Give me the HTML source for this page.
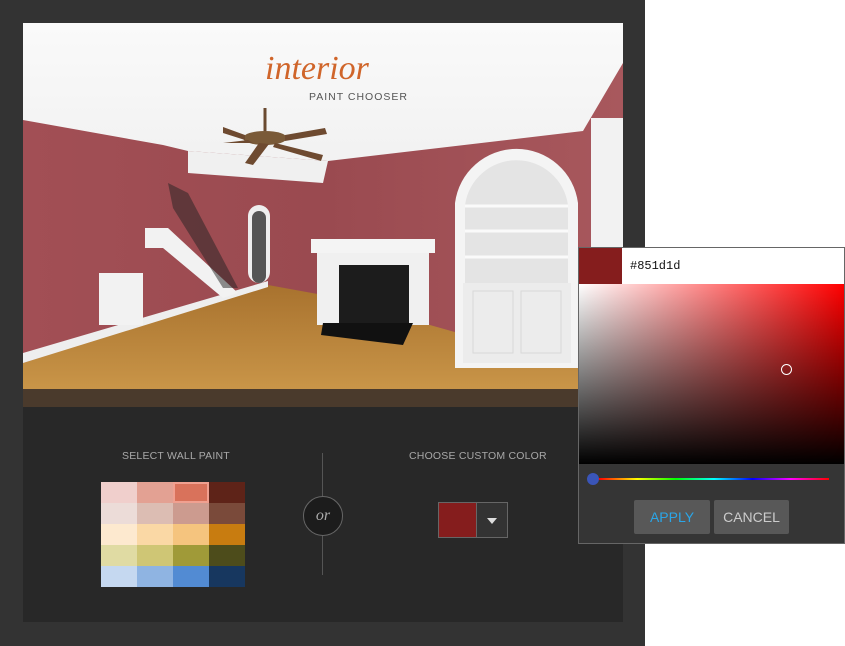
<!DOCTYPE html>
<html><head><meta charset="utf-8"><style>
*{margin:0;padding:0;box-sizing:border-box}
body{width:845px;height:646px;background:#fff;position:relative;overflow:hidden;font-family:"Liberation Sans",sans-serif}
#dark{position:absolute;left:0;top:0;width:645px;height:646px;background:#333}
#panel{position:absolute;left:23px;top:23px;width:600px;height:599px;background:#282828}
.lbl{position:absolute;color:#a8a8a8;font-size:10.5px;letter-spacing:.2px}
.grid{position:absolute;left:101px;top:482px;width:144px;display:grid;grid-template-columns:repeat(4,36px);grid-auto-rows:21px}
#picker{position:absolute;left:578px;top:247px;width:267px;height:297px;background:#353535;border:1px solid #666}
.btn{position:absolute;top:252px;height:34px;background:#585858;border-radius:2px;font-size:14px;text-align:center;line-height:34px}
</style></head><body>
<div id="dark"></div>
<div id="panel"></div>
<svg style="position:absolute;left:23px;top:23px" width="600" height="384" viewBox="0 0 600 384">
<defs>
<linearGradient id="c" x1="0" y1="0" x2="0" y2="1"><stop offset="0" stop-color="#fafafa"/><stop offset="1" stop-color="#e2e2e2"/></linearGradient>
<linearGradient id="f" x1="0" y1="0" x2="0" y2="1"><stop offset="0" stop-color="#a8722e"/><stop offset="1" stop-color="#c99548"/></linearGradient>
<linearGradient id="w" x1="0" y1="0" x2="1" y2="0"><stop offset="0" stop-color="#a24f55"/><stop offset=".5" stop-color="#9a4a50"/><stop offset="1" stop-color="#a8585d"/></linearGradient>
</defs>
<rect width="600" height="384" fill="url(#c)"/>
<polygon points="0,97 140,122 165,128 305,138 560,108 600,40 600,320 0,340" fill="url(#w)"/>
<polygon points="165,128 305,138 300,160 165,150" fill="#f0f0f0"/>
<polygon points="0,340 245,262 300,272 560,345 560,366 0,366" fill="url(#f)"/>
<polygon points="0,330 245,258 245,264 0,340" fill="#eee"/>
<polygon points="122,205 145,205 215,270 200,275 140,225 122,225" fill="#f2f2f2"/>
<polygon points="145,160 165,170 215,265 200,265 150,185" fill="#222" opacity=".5"/>
<rect x="225" y="182" width="22" height="78" rx="11" fill="#eee"/><rect x="229" y="188" width="14" height="72" rx="7" fill="#555"/>
<rect x="76" y="250" width="44" height="52" fill="#f2f2f2"/>
<rect x="288" y="216" width="124" height="14" fill="#f4f4f4"/>
<rect x="294" y="230" width="112" height="72" fill="#f0f0f0"/>
<rect x="316" y="242" width="70" height="60" fill="#1c1c1c"/>
<polygon points="300,300 390,300 380,322 298,312" fill="#111"/>
<path d="M432,345 V180 A62,62 0 0 1 555,180 V345 Z" fill="#f4f4f4"/>
<path d="M442,260 V182 A52,52 0 0 1 545,182 V260 Z" fill="#e4e4e4"/>
<g stroke="#fafafa" stroke-width="3"><line x1="442" y1="183" x2="545" y2="183"/><line x1="442" y1="208" x2="545" y2="208"/><line x1="442" y1="234" x2="545" y2="234"/></g>
<rect x="440" y="260" width="108" height="80" fill="#ececec"/>
<rect x="450" y="268" width="40" height="62" fill="none" stroke="#d8d8d8"/><rect x="498" y="268" width="40" height="62" fill="none" stroke="#d8d8d8"/>
<rect x="568" y="95" width="32" height="150" fill="#f2f2f2"/>
<line x1="242" y1="85" x2="242" y2="108" stroke="#6a4a30" stroke-width="3"/>
<ellipse cx="242" cy="115" rx="22" ry="7" fill="#7a5a38"/>
<g fill="#6e4a30"><polygon points="222,112 200,104 200,110 222,117"/><polygon points="262,112 302,105 304,111 262,118"/><polygon points="236,120 222,140 230,142 246,121"/><polygon points="252,120 300,132 298,138 250,124"/><polygon points="225,117 200,120 230,120"/></g>
<rect x="0" y="366" width="600" height="18" fill="#4a3a2c"/>
<text x="242" y="56" font-family="Liberation Serif,serif" font-style="italic" font-size="34" fill="#d0652a">interior</text>
<text x="286" y="77" font-size="10.5" fill="#555" letter-spacing="1">PAINT CHOOSER</text>
</svg>
<div class="lbl" style="left:122px;top:450px">SELECT WALL PAINT</div>
<div class="lbl" style="left:409px;top:450px">CHOOSE CUSTOM COLOR</div>
<div class="grid">
<div style="background:#f0cfcc"></div><div style="background:#e3a193"></div><div style="background:#d9725b;border:2px solid #f0a090"></div><div style="background:#5e2318"></div>
<div style="background:#ecdcd8"></div><div style="background:#dcbdb3"></div><div style="background:#cc9b8f"></div><div style="background:#7a4a3a"></div>
<div style="background:#fde9cf"></div><div style="background:#fad8a5"></div><div style="background:#f5c47e"></div><div style="background:#c87c10"></div>
<div style="background:#e0dba3"></div><div style="background:#cfc675"></div><div style="background:#a09a38"></div><div style="background:#4d4c1b"></div>
<div style="background:#c5d8f0"></div><div style="background:#8fb4e2"></div><div style="background:#528bd3"></div><div style="background:#17375f"></div>
</div>
<div style="position:absolute;left:322px;top:453px;width:1px;height:122px;background:#555"></div>
<div style="position:absolute;left:303px;top:496px;width:40px;height:40px;border-radius:50%;background:#1c1c1c;border:1px solid #666;color:#aaa;font-family:'Liberation Serif',serif;font-style:italic;font-size:16px;text-align:center;line-height:37px">or</div>
<div style="position:absolute;left:438px;top:502px;width:70px;height:36px;background:#333;border:1px solid #666">
<div style="position:absolute;left:0;top:0;width:38px;height:34px;background:#851d1d;border-right:1px solid #666"></div>
<div style="position:absolute;left:48px;top:15px;width:0;height:0;border-left:5px solid transparent;border-right:5px solid transparent;border-top:6px solid #ddd"></div>
</div>
<div id="picker">
<div style="position:absolute;left:0;top:0;width:265px;height:36px;background:#fff"></div>
<div style="position:absolute;left:0;top:0;width:43px;height:36px;background:#851d1d"></div>
<div style="position:absolute;left:51px;top:11px;font-family:'Liberation Mono',monospace;font-size:12px;color:#111">#851d1d</div>
<div style="position:absolute;left:0;top:36px;width:265px;height:180px;background:linear-gradient(to top,#000,rgba(0,0,0,0)),linear-gradient(to right,#fff,#f00)"></div>
<div style="position:absolute;left:202px;top:116px;width:11px;height:11px;border-radius:50%;border:1.5px solid #fff"></div>
<div style="position:absolute;left:20px;top:230px;width:230px;height:2px;background:linear-gradient(to right,#f00,#ff0,#0f0,#0ff,#00f,#f0f,#f00)"></div>
<div style="position:absolute;left:8px;top:225px;width:12px;height:12px;border-radius:50%;background:#3a55b8"></div>
<div class="btn" style="left:55px;width:76px;color:#2aa6e8">APPLY</div>
<div class="btn" style="left:135px;width:75px;color:#ccc">CANCEL</div>
</div>
</body></html>
